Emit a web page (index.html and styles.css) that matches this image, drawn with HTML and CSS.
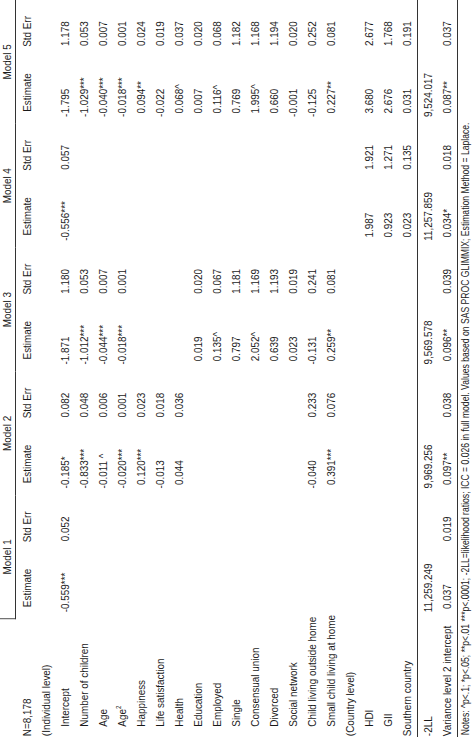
FILE: index.html
```html
<!DOCTYPE html>
<html>
<head>
<meta charset="utf-8">
<link rel="stylesheet" href="styles.css">
</head>
<body>
<div class="page">
  <div class="sheet">
    <div class="row head">
      <div class="lab"></div>
      <div class="model first">Model 1</div>
      <div class="model">Model 2</div>
      <div class="model">Model 3</div>
      <div class="model">Model 4</div>
      <div class="model">Model 5</div>
    </div>
    <div class="row sub">
      <div class="lab">N=8,178</div>
      <div class="est h">Estimate</div><div class="se h">Std Err</div>
      <div class="est h">Estimate</div><div class="se h">Std Err</div>
      <div class="est h">Estimate</div><div class="se h">Std Err</div>
      <div class="est h">Estimate</div><div class="se h">Std Err</div>
      <div class="est h">Estimate</div><div class="se h">Std Err</div>
    </div>
    <div class="row"><div class="lab">(Individual level)</div></div>
    <div class="row">
      <div class="lab in">Intercept</div>
      <div class="est"><i class="s">-</i>0.559***</div><div class="se">0.052</div>
      <div class="est"><i class="s">-</i>0.185*</div><div class="se">0.082</div>
      <div class="est"><i class="s">-</i>1.871</div><div class="se">1.180</div>
      <div class="est"><i class="s">-</i>0.556***</div><div class="se">0.057</div>
      <div class="est"><i class="s">-</i>1.795</div><div class="se">1.178</div>
    </div>
    <div class="row">
      <div class="lab in">Number of children</div>
      <div class="est"></div><div class="se"></div>
      <div class="est"><i class="s">-</i>0.833***</div><div class="se">0.048</div>
      <div class="est"><i class="s">-</i>1.012***</div><div class="se">0.053</div>
      <div class="est"></div><div class="se"></div>
      <div class="est"><i class="s">-</i>1.029***</div><div class="se">0.053</div>
    </div>
    <div class="row">
      <div class="lab in">Age</div>
      <div class="est"></div><div class="se"></div>
      <div class="est"><i class="s">-</i>0.011 ^</div><div class="se">0.006</div>
      <div class="est"><i class="s">-</i>0.044***</div><div class="se">0.007</div>
      <div class="est"></div><div class="se"></div>
      <div class="est"><i class="s">-</i>0.040***</div><div class="se">0.007</div>
    </div>
    <div class="row">
      <div class="lab in">Age<sup>2</sup></div>
      <div class="est"></div><div class="se"></div>
      <div class="est"><i class="s">-</i>0.020***</div><div class="se">0.001</div>
      <div class="est"><i class="s">-</i>0.018***</div><div class="se">0.001</div>
      <div class="est"></div><div class="se"></div>
      <div class="est"><i class="s">-</i>0.018***</div><div class="se">0.001</div>
    </div>
    <div class="row">
      <div class="lab in">Happiness</div>
      <div class="est"></div><div class="se"></div>
      <div class="est"><i class="s"></i>0.120***</div><div class="se">0.023</div>
      <div class="est"></div><div class="se"></div>
      <div class="est"></div><div class="se"></div>
      <div class="est"><i class="s"></i>0.094**</div><div class="se">0.024</div>
    </div>
    <div class="row">
      <div class="lab in">Life satisfaction</div>
      <div class="est"></div><div class="se"></div>
      <div class="est"><i class="s">-</i>0.013</div><div class="se">0.018</div>
      <div class="est"></div><div class="se"></div>
      <div class="est"></div><div class="se"></div>
      <div class="est"><i class="s">-</i>0.022</div><div class="se">0.019</div>
    </div>
    <div class="row">
      <div class="lab in">Health</div>
      <div class="est"></div><div class="se"></div>
      <div class="est"><i class="s"></i>0.044</div><div class="se">0.036</div>
      <div class="est"></div><div class="se"></div>
      <div class="est"></div><div class="se"></div>
      <div class="est"><i class="s"></i>0.068^</div><div class="se">0.037</div>
    </div>
    <div class="row">
      <div class="lab in">Education</div>
      <div class="est"></div><div class="se"></div>
      <div class="est"></div><div class="se"></div>
      <div class="est"><i class="s"></i>0.019</div><div class="se">0.020</div>
      <div class="est"></div><div class="se"></div>
      <div class="est"><i class="s"></i>0.007</div><div class="se">0.020</div>
    </div>
    <div class="row">
      <div class="lab in">Employed</div>
      <div class="est"></div><div class="se"></div>
      <div class="est"></div><div class="se"></div>
      <div class="est"><i class="s"></i>0.135^</div><div class="se">0.067</div>
      <div class="est"></div><div class="se"></div>
      <div class="est"><i class="s"></i>0.116^</div><div class="se">0.068</div>
    </div>
    <div class="row">
      <div class="lab in">Single</div>
      <div class="est"></div><div class="se"></div>
      <div class="est"></div><div class="se"></div>
      <div class="est"><i class="s"></i>0.797</div><div class="se">1.181</div>
      <div class="est"></div><div class="se"></div>
      <div class="est"><i class="s"></i>0.769</div><div class="se">1.182</div>
    </div>
    <div class="row">
      <div class="lab in">Consensual union</div>
      <div class="est"></div><div class="se"></div>
      <div class="est"></div><div class="se"></div>
      <div class="est"><i class="s"></i>2.052^</div><div class="se">1.169</div>
      <div class="est"></div><div class="se"></div>
      <div class="est"><i class="s"></i>1.995^</div><div class="se">1.168</div>
    </div>
    <div class="row">
      <div class="lab in">Divorced</div>
      <div class="est"></div><div class="se"></div>
      <div class="est"></div><div class="se"></div>
      <div class="est"><i class="s"></i>0.639</div><div class="se">1.193</div>
      <div class="est"></div><div class="se"></div>
      <div class="est"><i class="s"></i>0.660</div><div class="se">1.194</div>
    </div>
    <div class="row">
      <div class="lab in">Social network</div>
      <div class="est"></div><div class="se"></div>
      <div class="est"></div><div class="se"></div>
      <div class="est"><i class="s"></i>0.023</div><div class="se">0.019</div>
      <div class="est"></div><div class="se"></div>
      <div class="est"><i class="s">-</i>0.001</div><div class="se">0.020</div>
    </div>
    <div class="row">
      <div class="lab in">Child living outside home</div>
      <div class="est"></div><div class="se"></div>
      <div class="est"><i class="s">-</i>0.040</div><div class="se">0.233</div>
      <div class="est"><i class="s">-</i>0.131</div><div class="se">0.241</div>
      <div class="est"></div><div class="se"></div>
      <div class="est"><i class="s">-</i>0.125</div><div class="se">0.252</div>
    </div>
    <div class="row">
      <div class="lab in">Small child living at home</div>
      <div class="est"></div><div class="se"></div>
      <div class="est"><i class="s"></i>0.391***</div><div class="se">0.076</div>
      <div class="est"><i class="s"></i>0.259**</div><div class="se">0.081</div>
      <div class="est"></div><div class="se"></div>
      <div class="est"><i class="s"></i>0.227**</div><div class="se">0.081</div>
    </div>
    <div class="row"><div class="lab">(Country level)</div></div>
    <div class="row">
      <div class="lab in">HDI</div>
      <div class="est"></div><div class="se"></div>
      <div class="est"></div><div class="se"></div>
      <div class="est"></div><div class="se"></div>
      <div class="est"><i class="s"></i>1.987</div><div class="se">1.921</div>
      <div class="est"><i class="s"></i>3.680</div><div class="se">2.677</div>
    </div>
    <div class="row">
      <div class="lab in">GII</div>
      <div class="est"></div><div class="se"></div>
      <div class="est"></div><div class="se"></div>
      <div class="est"></div><div class="se"></div>
      <div class="est"><i class="s"></i>0.923</div><div class="se">1.271</div>
      <div class="est"><i class="s"></i>2.676</div><div class="se">1.768</div>
    </div>
    <div class="row">
      <div class="lab">Southern country</div>
      <div class="est"></div><div class="se"></div>
      <div class="est"></div><div class="se"></div>
      <div class="est"></div><div class="se"></div>
      <div class="est"><i class="s"></i>0.023</div><div class="se">0.135</div>
      <div class="est"><i class="s"></i>0.031</div><div class="se">0.191</div>
    </div>
    <div class="row ll">
      <div class="lab">-2LL</div>
      <div class="fit">11,259.249</div>
      <div class="fit">9,969.256</div>
      <div class="fit">9,569.578</div>
      <div class="fit">11,257.859</div>
      <div class="fit">9,524.017</div>
    </div>
    <div class="row var">
      <div class="lab">Variance level 2 intercept</div>
      <div class="est"><i class="s"></i>0.037</div><div class="se">0.019</div>
      <div class="est"><i class="s"></i>0.097**</div><div class="se">0.038</div>
      <div class="est"><i class="s"></i>0.096**</div><div class="se">0.039</div>
      <div class="est"><i class="s"></i>0.034*</div><div class="se">0.018</div>
      <div class="est"><i class="s"></i>0.087**</div><div class="se">0.037</div>
    </div>
    <div class="notes">Notes: ^p&lt;.1; *p&lt;.05; **p&lt;.01 ***p&lt;.0001; -2LL=likelihood ratios; ICC = 0.026 in full model. Values based on SAS PROC GLIMMIX; Estimation Method = Laplace.</div>
  </div>
</div>
</body>
</html>
```
FILE: styles.css
```css
html, body {
  margin: 0;
  padding: 0;
  background: #fff;
}
.page {
  width: 474px;
  height: 737px;
  overflow: hidden;
  background: #fff;
}
/* The table is laid out upright, 857px wide (737px once squeezed by 0.86),
   then turned a quarter turn counter-clockwise as in the scanned page. */
.sheet {
  width: 857px;
  height: 474px;
  transform-origin: 0 0;
  transform: translateY(737px) rotate(-90deg) scaleX(0.86);
  font-family: "Liberation Sans", Arial, sans-serif;
  font-size: 11.5px;
  color: #1a1a1a;
}
.row {
  display: grid;
  grid-template-columns: 137px repeat(5, 74.5px 69.5px);
  height: 19px;
  line-height: 19px;
  white-space: nowrap;
}
.row.head {
  height: 16px;
  line-height: 15px;
}
.row.sub {
  height: 21px;
  line-height: 22px;
}
.lab {
  padding-left: 1px;
}
.lab.in {
  padding-left: 12px;
}
.lab sup {
  font-size: 7px;
  line-height: 0;
  vertical-align: 5px;
}
.model {
  grid-column: span 2;
  text-align: center;
  border-bottom: 1px solid #333;
}
.model.first {
  border-left: 1px solid #333;
}
.est {
  padding-left: 8px;
}
.est.h {
  padding-left: 14px;
}
.se {
  padding-left: 16px;
}
.se.h {
  padding-left: 15px;
}
.s {
  font-style: normal;
  display: inline-block;
  width: 3.9px;
}
.fit {
  grid-column: span 2;
  padding-left: 8px;
}
.row.ll {
  border-top: 1px solid #333;
  height: 20px;
  line-height: 21px;
}
.row.var {
  border-bottom: 1px solid #333;
}
.notes {
  font-size: 10px;
  line-height: 16px;
  padding-left: 2px;
  white-space: nowrap;
  color: #222;
}
```
